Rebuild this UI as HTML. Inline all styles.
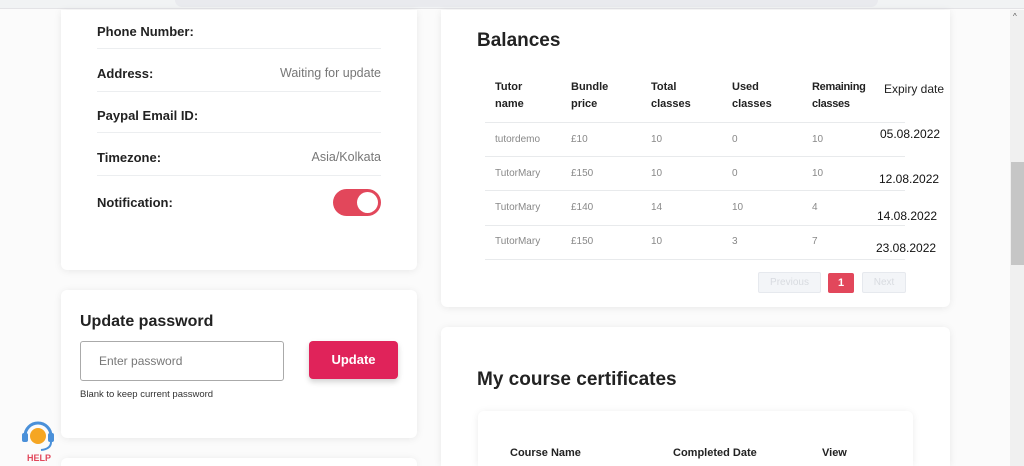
<!DOCTYPE html>
<html style="width:1024px;height:466px;overflow:hidden"><head><style>
*{margin:0;padding:0;box-sizing:border-box}
body{width:1024px;height:466px;overflow:hidden;background:#fbfbfb;font-family:"Liberation Sans",sans-serif;position:relative;color:#222}
.abs{position:absolute}
.card{position:absolute;background:#fff;border-radius:6px;box-shadow:0 1px 8px rgba(0,0,0,.08)}
.lbl{position:absolute;left:97px;font-size:13px;font-weight:bold;color:#222}
.val{position:absolute;right:643px;font-size:12.5px;color:#777}
.hr{position:absolute;left:97px;width:284px;height:1px;background:#eceef0}
.th{position:absolute;font-size:11px;font-weight:bold;line-height:17px;color:#222}
.td{position:absolute;font-size:10px;color:#888}
.dt{position:absolute;font-size:12px;color:#111}
.rl{position:absolute;left:485px;width:420px;height:1px;background:#e8eaec}
</style></head><body>
<div class="abs" style="left:0;top:0;width:1024px;height:9px;background:#f1f3f4;border-bottom:1px solid #e3e3e6"></div>
<div class="abs" style="left:175px;top:0;width:703px;height:7px;background:#e9eaee;border-radius:0 0 8px 8px"></div>
<div class="abs" style="left:1010px;top:10px;width:14px;height:456px;background:#f0f0f0"></div>
<div class="abs" style="left:1011px;top:162px;width:13px;height:103px;background:#c6c6c6"></div>
<div class="abs" style="left:1013px;top:12px;font-size:8px;color:#555">&#94;</div>

<div class="card" style="left:61px;top:10px;width:356px;height:260px;border-radius:0 0 6px 6px"></div>
<div class="lbl" style="top:24px">Phone Number:</div>
<div class="hr" style="top:48px"></div>
<div class="lbl" style="top:66px">Address:</div>
<div class="val" style="top:66px">Waiting for update</div>
<div class="hr" style="top:91px"></div>
<div class="lbl" style="top:108px">Paypal Email ID:</div>
<div class="hr" style="top:132px"></div>
<div class="lbl" style="top:150px">Timezone:</div>
<div class="val" style="top:150px">Asia/Kolkata</div>
<div class="hr" style="top:175px"></div>
<div class="lbl" style="top:195px">Notification:</div>
<div class="abs" style="left:333px;top:189px;width:48px;height:27px;border-radius:14px;background:#e2475b"></div>
<div class="abs" style="left:357px;top:192px;width:21px;height:21px;border-radius:50%;background:#fff"></div>

<div class="card" style="left:61px;top:290px;width:356px;height:148px"></div>
<div class="abs" style="left:80px;top:313px;font-size:16px;font-weight:bold;color:#222">Update password</div>
<div class="abs" style="left:80px;top:341px;width:204px;height:40px;border:1px solid #aaa;border-radius:3px;font-size:12px;color:#777;padding:12px 0 0 18px">Enter password</div>
<div class="abs" style="left:309px;top:341px;width:89px;height:38px;background:#e0235a;border-radius:4px;box-shadow:0 3px 6px rgba(0,0,0,.18);color:#fff;font-size:13px;font-weight:bold;text-align:center;line-height:38px">Update</div>
<div class="abs" style="left:80px;top:389px;font-size:9.5px;color:#333">Blank to keep current password</div>
<div class="card" style="left:61px;top:458px;width:356px;height:8px;border-radius:6px 6px 0 0"></div>

<svg class="abs" style="left:20px;top:418px" width="36" height="36" viewBox="0 0 36 36"><path d="M5 18a13 13 0 0 1 26 0" fill="none" stroke="#4a90d9" stroke-width="3"/><rect x="2" y="15" width="6" height="9" rx="2" fill="#4a90d9"/><rect x="28" y="15" width="6" height="9" rx="2" fill="#4a90d9"/><circle cx="18" cy="18" r="8" fill="#f5a623"/><path d="M31 24q0 7-10 8" fill="none" stroke="#4a90d9" stroke-width="2"/></svg>
<div class="abs" style="left:27px;top:453px;font-size:9px;line-height:11px;font-weight:bold;color:#e2475b">HELP</div>

<div class="card" style="left:441px;top:10px;width:509px;height:297px;border-radius:0 0 6px 6px"></div>
<div class="abs" style="left:477px;top:30px;font-size:19px;font-weight:bold;color:#222">Balances</div>
<div class="th" style="left:495px;top:79px">Tutor<br>name</div>
<div class="th" style="left:571px;top:79px">Bundle<br>price</div>
<div class="th" style="left:651px;top:79px">Total<br>classes</div>
<div class="th" style="left:732px;top:79px">Used<br>classes</div>
<div class="th" style="left:812px;top:79px;letter-spacing:-0.3px">Remaining<br>classes</div>
<div class="abs" style="left:884px;top:82px;font-size:12px;color:#222">Expiry date</div>
<div class="rl" style="top:122px"></div>
<div class="rl" style="top:156px"></div>
<div class="rl" style="top:190px"></div>
<div class="rl" style="top:225px"></div>
<div class="rl" style="top:259px"></div>
<div class="td" style="left:495px;top:134px">tutordemo</div><div class="td" style="left:571px;top:134px">£10</div><div class="td" style="left:651px;top:134px">10</div><div class="td" style="left:732px;top:134px">0</div><div class="td" style="left:812px;top:134px">10</div><div class="dt" style="left:880px;top:127px">05.08.2022</div>
<div class="td" style="left:495px;top:168px">TutorMary</div><div class="td" style="left:571px;top:168px">£150</div><div class="td" style="left:651px;top:168px">10</div><div class="td" style="left:732px;top:168px">0</div><div class="td" style="left:812px;top:168px">10</div><div class="dt" style="left:879px;top:172px">12.08.2022</div>
<div class="td" style="left:495px;top:202px">TutorMary</div><div class="td" style="left:571px;top:202px">£140</div><div class="td" style="left:651px;top:202px">14</div><div class="td" style="left:732px;top:202px">10</div><div class="td" style="left:812px;top:202px">4</div><div class="dt" style="left:877px;top:209px">14.08.2022</div>
<div class="td" style="left:495px;top:236px">TutorMary</div><div class="td" style="left:571px;top:236px">£150</div><div class="td" style="left:651px;top:236px">10</div><div class="td" style="left:732px;top:236px">3</div><div class="td" style="left:812px;top:236px">7</div><div class="dt" style="left:876px;top:241px">23.08.2022</div>
<div class="abs" style="left:758px;top:272px;width:63px;height:21px;background:#f3f5f8;border:1px solid #e6e9ee;border-radius:2px;font-size:10px;color:#d8dbe0;text-align:center;line-height:20px">Previous</div>
<div class="abs" style="left:828px;top:273px;width:26px;height:20px;background:#e2475b;border-radius:2px;font-size:11px;font-weight:bold;color:#fff;text-align:center;line-height:20px">1</div>
<div class="abs" style="left:862px;top:272px;width:44px;height:21px;background:#f3f5f8;border:1px solid #e6e9ee;border-radius:2px;font-size:10px;color:#d8dbe0;text-align:center;line-height:20px">Next</div>

<div class="card" style="left:441px;top:327px;width:509px;height:139px;border-radius:6px 6px 0 0"></div>
<div class="abs" style="left:477px;top:369px;font-size:19px;font-weight:bold;color:#222">My course certificates</div>
<div class="card" style="left:478px;top:411px;width:435px;height:55px;border-radius:6px 6px 0 0"></div>
<div class="abs" style="left:510px;top:447px;font-size:11px;font-weight:bold;color:#222">Course Name</div>
<div class="abs" style="left:673px;top:447px;font-size:11px;font-weight:bold;color:#222">Completed Date</div>
<div class="abs" style="left:822px;top:447px;font-size:11px;font-weight:bold;color:#222">View</div>
</body></html>
